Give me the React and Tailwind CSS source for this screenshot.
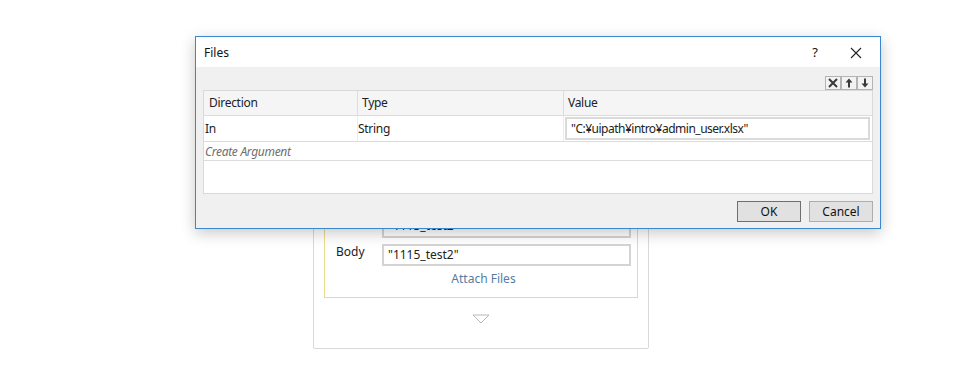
import React from 'react';

const font = { fontFamily: '"Segoe UI", "Noto Sans", sans-serif' };

const ToolButton = ({ children }) => (
  <div className="flex h-[14px] w-[16px] items-center justify-center border border-[#b4b4b4] bg-[#f3f3f3] text-[#3c3c3c]">
    {children}
  </div>
);

const BackgroundCard = () => (
  <div className="ml-[313px] mt-[140px] h-[209px] w-[336px] rounded-[2px] border border-[#d9d9d9] px-[10px]">
    <div className="mt-[9px] border border-[#eadc8f] pb-[10px] pl-[11px] pr-[6px] pt-[35px]">
      <div className="flex h-[22px] items-center">
        <span className="w-[45px] text-[12px] text-[#222]">To</span>
        <div className="ml-[1px] h-[22px] flex-1 border-2 border-[#d4d4d4] px-[4px] text-[12px] leading-[18px]">"1115_test"</div>
      </div>
      <div className="mt-[7px] flex h-[23px] items-start">
        <span className="-mt-[5px] w-[45px] text-[12px] leading-[18px] text-[#222]">Subject</span>
        <div className="ml-[1px] h-[23px] flex-1 border-2 border-[#d4d4d4] px-[4px] text-[12px] leading-[17px] text-[#222]">"1115_test2"</div>
      </div>
      <div className="mt-[6px] flex h-[22px] items-start">
        <span className="-mt-[1px] w-[45px] text-[12px] leading-[18px] text-[#222]">Body</span>
        <div className="ml-[1px] h-[22px] flex-1 border-2 border-[#d4d4d4] px-[4px] text-[12px] leading-[18px] text-[#222]">"1115_test2"</div>
      </div>
      <div className="mt-[5px] text-center text-[12px] leading-[16px] text-[#567ca4]">Attach Files</div>
    </div>
    <div className="mt-[16px] flex justify-center">
      <svg width="18" height="10" viewBox="0 0 18 10">
        <path d="M1 1 L17 1 L9 9 Z" fill="none" stroke="#b8b8b8" strokeWidth="1" />
      </svg>
    </div>
  </div>
);

const FilesDialog = () => (
  <div className="absolute left-[195px] top-[36px] flex h-[193px] w-[686px] flex-col border border-[#3a86d0] bg-[#f0f0f0] shadow-[0_4px_14px_rgba(0,0,0,0.22)]">
    <div className="flex h-[30px] items-center bg-white pt-[1px] text-[12px] text-[#111]">
      <span className="pl-[8px]">Files</span>
      <span className="ml-auto mr-[32px] text-[13px]">?</span>
      <svg className="mr-[18px]" width="12" height="12" viewBox="0 0 12 12">
        <path d="M1 1 L11 11 M11 1 L1 11" stroke="#222" strokeWidth="1.1" />
      </svg>
    </div>
    <div className="flex flex-1 flex-col px-[7px]">
      <div className="mt-[9px] flex justify-end">
        <ToolButton>
          <svg width="10" height="10" viewBox="0 0 10 10">
            <path d="M1 1 L9 9 M9 1 L1 9" stroke="#3a3a3a" strokeWidth="2" />
          </svg>
        </ToolButton>
        <ToolButton>
          <svg width="8" height="10" viewBox="0 0 8 10">
            <path d="M4 0.5 L7.5 4.5 L5 4.5 L5 9.5 L3 9.5 L3 4.5 L0.5 4.5 Z" fill="#3a3a3a" />
          </svg>
        </ToolButton>
        <ToolButton>
          <svg width="8" height="10" viewBox="0 0 8 10">
            <path d="M4 9.5 L7.5 5.5 L5 5.5 L5 0.5 L3 0.5 L3 5.5 L0.5 5.5 Z" fill="#3a3a3a" />
          </svg>
        </ToolButton>
      </div>
      <div className="flex h-[104px] flex-col border border-[#d9d9d9] bg-white text-[12px] tracking-[-0.3px] text-[#222]">
        <div className="flex h-[25px] border-b border-[#dcdcdc] bg-[#f5f5f5]">
          <div className="flex w-[154px] items-center border-r border-[#dcdcdc] pl-[5px]">Direction</div>
          <div className="flex w-[206px] items-center border-r border-[#dcdcdc] pl-[4px]">Type</div>
          <div className="flex flex-1 items-center pl-[4px]">Value</div>
        </div>
        <div className="flex h-[26px] border-b border-[#dcdcdc]">
          <div className="flex w-[154px] items-center border-r border-[#ececec] pl-[1px] pt-[1px]">In</div>
          <div className="flex w-[206px] items-center border-r border-[#ececec] pt-[1px]">String</div>
          <div className="flex flex-1 items-center pl-[1px] pr-[2px]">
            <div className="flex h-[23px] flex-1 items-center border-2 border-[#dadada] pl-[4px] tracking-[-0.5px]">
              "C:¥uipath¥intro¥admin_user.xlsx"
            </div>
          </div>
        </div>
        <div className="flex h-[19px] items-center border-b border-[#dcdcdc] pl-[1px] pt-[1px] italic text-[#6e6e6e]">
          Create Argument
        </div>
      </div>
      <div className="mt-[7px] flex justify-end gap-[8px] text-[12px] text-[#111]">
        <button className="flex h-[21px] w-[64px] items-center justify-center border border-[#6f6f6f] bg-[#e1e1e1]">OK</button>
        <button className="flex h-[21px] w-[64px] items-center justify-center border border-[#adadad] bg-[#e1e1e1]">Cancel</button>
      </div>
    </div>
  </div>
);

const App = () => (
  <div className="relative h-[366px] w-[974px] overflow-hidden bg-white" style={font}>
    <BackgroundCard />
    <FilesDialog />
  </div>
);

export default App;
